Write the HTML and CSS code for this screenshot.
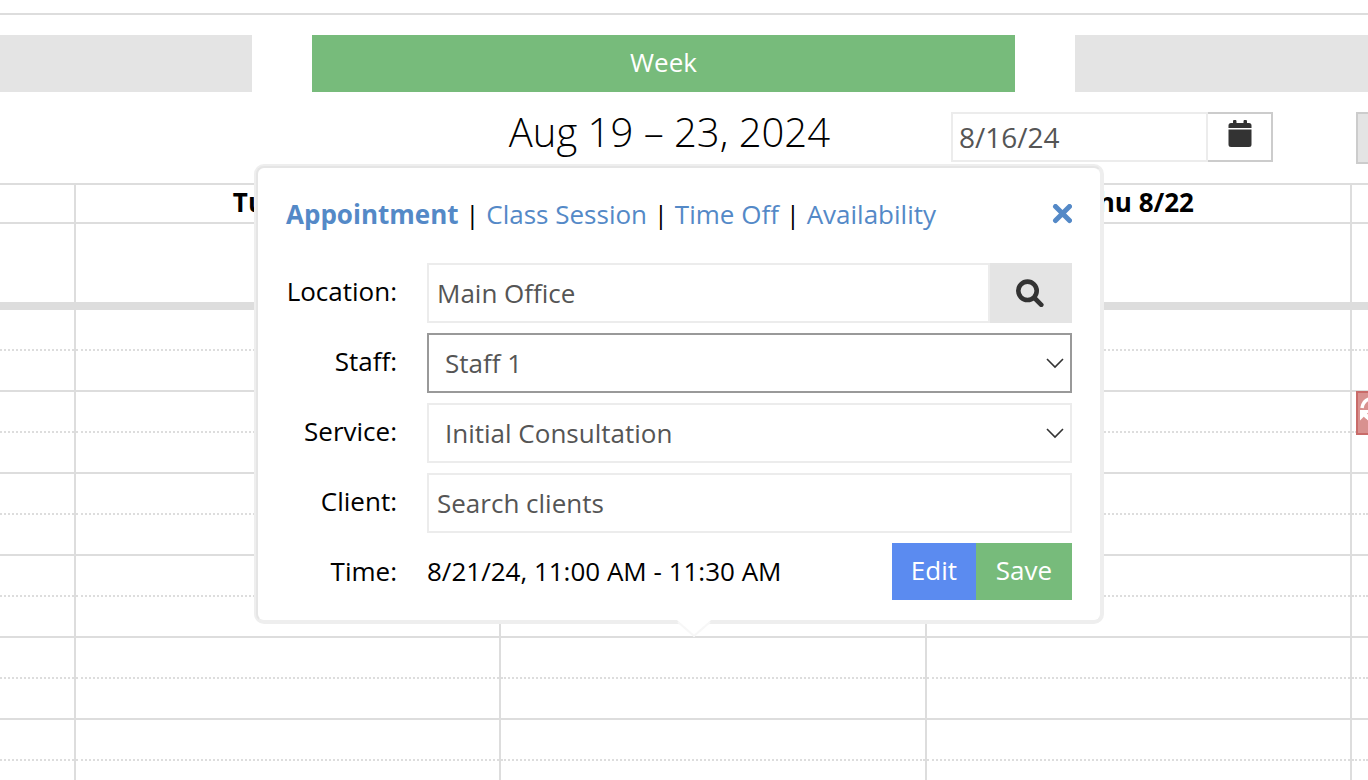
FILE: index.html
```html
<!DOCTYPE html>
<html lang="en">
<head>
  <meta charset="UTF-8">
  <meta name="viewport" content="width=device-width, initial-scale=1">
  <title>Calendar</title>
  <link rel="stylesheet" href="styles.css">
</head>
<body>
  <nav class="views">
    <button type="button" class="view" aria-label="Day"></button>
    <button type="button" class="view active">Week</button>
    <button type="button" class="view" aria-label="Month"></button>
  </nav>

  <header class="toolbar">
    <h1 class="title">Aug 19 – 23, 2024</h1>
    <div class="date-picker">
      <input type="text" class="date-input" value="8/16/24" aria-label="Date">
      <button type="button" class="date-btn" aria-label="Open calendar">
        <svg width="24" height="28" viewBox="0 0 24 28" fill="#333">
          <path d="M5 3V1.500a1.500 1.500 0 0 1 3.500 0V3h7V1.500a1.500 1.500 0 0 1 3.500 0V3h2a2.500 2.500 0 0 1 2.500 2.500V8H.5V5.500A2.500 2.500 0 0 1 3 3z"/>
          <path d="M.5 9.500h23v15A2.500 2.500 0 0 1 21 27H3a2.500 2.500 0 0 1-2.500-2.500z"/>
        </svg>
      </button>
    </div>
    <button type="button" class="nav-btn" aria-label="Previous"></button>
  </header>

  <main class="calendar">
    <table class="grid">
      <colgroup>
        <col class="col-time"><col><col><col><col class="col-last">
      </colgroup>
      <thead>
        <tr><td></td><th>Tue 8/20</th><th></th><th>Thu 8/22</th><td></td></tr>
        <tr class="all-day"><td></td><td></td><td></td><td></td><td></td></tr>
      </thead>
      <tbody>
        <tr class="half"><td></td><td></td><td></td><td></td><td></td></tr>
        <tr><td></td><td></td><td></td><td></td><td></td></tr>
        <tr class="half"><td></td><td></td><td></td><td></td><td class="has-event">
          <div class="event">
            <svg width="26" height="26" viewBox="0 0 26 26" fill="none" stroke="#fff" stroke-width="3.500">
              <path d="M2 12C3 6 7 2.500 13 2.500s8 2 10 6M23 15c-1 5-5 8-10 8-4 0-7-2-9-5"/>
              <path d="M0 14h11l-4 3.500 4 4-3 3-4-4-4 4z" fill="#fff" stroke="none"/>
              <path d="M25 2v9h-9z" fill="#fff" stroke="none"/>
            </svg>
          </div>
        </td></tr>
        <tr><td></td><td></td><td></td><td></td><td></td></tr>
        <tr class="half"><td></td><td></td><td></td><td></td><td></td></tr>
        <tr><td></td><td></td><td></td><td></td><td></td></tr>
        <tr class="half"><td></td><td></td><td></td><td></td><td></td></tr>
        <tr><td></td><td></td><td></td><td></td><td></td></tr>
        <tr class="half"><td></td><td></td><td></td><td></td><td></td></tr>
        <tr><td></td><td></td><td></td><td></td><td></td></tr>
        <tr class="half"><td></td><td></td><td></td><td></td><td></td></tr>
        <tr><td></td><td></td><td></td><td></td><td></td></tr>
      </tbody>
    </table>

    <form class="popup">
      <div class="popup-head">
        <div class="tabs">
          <a href="#" class="current">Appointment</a> |
          <a href="#">Class Session</a> |
          <a href="#">Time Off</a> |
          <a href="#">Availability</a>
        </div>
        <button type="button" class="close" aria-label="Close">
          <svg width="20" height="20" viewBox="0 0 20 20" stroke="#5489c7" stroke-width="5" stroke-linecap="round">
            <path d="M3.500 2.500l14 14M17.500 2.500l-14 14"/>
          </svg>
        </button>
      </div>

      <div class="row">
        <label for="location">Location:</label>
        <div class="field">
          <input type="text" id="location" value="Main Office">
          <button type="button" class="search-btn" aria-label="Search">
            <svg width="28" height="28" viewBox="0 0 28 28" fill="none" stroke="#333">
              <circle cx="11.500" cy="11.800" r="9.200" stroke-width="4.600"/>
              <path d="M19 19.500l6.300 6.300" stroke-width="4.600" stroke-linecap="round"/>
            </svg>
          </button>
        </div>
      </div>

      <div class="row">
        <label for="staff">Staff:</label>
        <div class="field">
          <select id="staff" class="focused"><option>Staff 1</option></select>
          <svg class="chevron" width="18" height="11" viewBox="0 0 18 11" fill="none" stroke="#333" stroke-width="1.600">
            <path d="M1 1l8 8 8-8"/>
          </svg>
        </div>
      </div>

      <div class="row">
        <label for="service">Service:</label>
        <div class="field">
          <select id="service"><option>Initial Consultation</option></select>
          <svg class="chevron" width="18" height="11" viewBox="0 0 18 11" fill="none" stroke="#333" stroke-width="1.600">
            <path d="M1 1l8 8 8-8"/>
          </svg>
        </div>
      </div>

      <div class="row">
        <label for="client">Client:</label>
        <div class="field">
          <input type="text" id="client" placeholder="Search clients">
        </div>
      </div>

      <div class="row">
        <span class="label">Time:</span>
        <div class="field">
          <span class="time">8/21/24, 11:00 AM - 11:30 AM</span>
          <button type="button" class="btn edit">Edit</button>
          <button type="submit" class="btn save">Save</button>
        </div>
      </div>

      <svg class="arrow" width="34" height="18" viewBox="0 0 34 18">
        <path d="M0 0h34L17 17z" fill="#fff"/>
        <path d="M1 2l16 14L33 2" fill="none" stroke="#f7f7f7" stroke-width="2"/>
      </svg>
    </form>
  </main>
</body>
</html>
```
FILE: styles.css
```css
* {
  box-sizing: border-box;
}

body {
  margin: 0;
  height: 100vh;
  overflow: hidden;
  font-family: "Open Sans", "Noto Sans", sans-serif;
  font-size: 26px;
  color: #000;
  background: #fff;
}

button, input, select {
  margin: 0;
  font: inherit;
  border-radius: 0;
}

button {
  padding: 0;
  border: none;
  cursor: pointer;
}

svg {
  display: block;
}

/* day / week / month switch */
.views {
  display: grid;
  grid-template-columns: 252fr 703fr 293fr;
  gap: 60px;
  margin-top: 13px;
  padding-top: 20px;
  border-top: 2px solid #ddd;
}

.view {
  height: 57px;
  padding-bottom: 4px;
  background: #e4e4e4;
}

.view.active {
  background: #77bb7b;
  color: #fff;
}

.toolbar {
  display: flex;
  justify-content: flex-end;
  align-items: flex-start;
  height: 91px;
  padding-top: 20px;
}

.title {
  margin: 0 121px 0 0;
  font-size: 40px;
  font-weight: 300;
  line-height: 40px;
}

.date-picker {
  display: flex;
  height: 50px;
  margin-right: 83px;
}

.date-input {
  width: 257px;
  padding: 0 6px;
  border: 2px solid #ececec;
  font-size: 28px;
  color: #555;
}

.date-btn {
  width: 65px;
  padding: 0 0 6px 20px;
  border: 2px solid #ccc;
  border-left: none;
  background: #fff;
}

.nav-btn {
  width: 12px;
  height: 52px;
  border: 2px solid #ccc;
  border-right: none;
  background: #e4e4e4;
}

/* week grid */
.calendar {
  position: relative;
}

.grid {
  width: 100%;
  table-layout: fixed;
  border-collapse: collapse;
}

.col-time {
  width: 75px;
}

.col-last {
  width: 17px;
}

.grid th,
.grid td {
  height: 41px;
  padding: 0;
  border-top: 2px solid #ddd;
  border-bottom: 2px solid #ddd;
  border-left: 2px solid #ddd;
}

.grid th,
.grid thead td {
  height: 39px;
  padding-bottom: 2px;
  line-height: 35px;
}

.grid td:first-child {
  border-left: none;
}

.grid .all-day td {
  height: 83px;
  border-bottom: 8px solid #ddd;
}

.grid tbody tr:first-child td {
  height: 44px;
  border-top: 8px solid #ddd;
}

.grid .half td {
  border-bottom-style: dotted;
}

.grid .half + tr td {
  border-top-style: dotted;
}

.grid .has-event {
  position: relative;
}

.event {
  position: absolute;
  top: -1px;
  left: 4px;
  right: 0;
  height: 44px;
  padding: 3px 2px;
  overflow: hidden;
  border: 2px solid #c96b69;
  border-right: none;
  background: #d8918f;
}

/* new booking popup */
.popup {
  position: absolute;
  top: -17px;
  left: calc(50% - 428px);
  width: 846px;
  padding: 20px 28px;
  border: 2px solid;
  border-color: #e5e5e5 #eee #eee #e5e5e5;
  border-radius: 8px;
  box-shadow: 0 0 0 2px #eee;
  background: #fff;
}

.popup-head {
  display: flex;
  justify-content: space-between;
  align-items: center;
  height: 52px;
  margin-bottom: 23px;
}

.tabs a {
  color: #5489c7;
  text-decoration: none;
}

.tabs .current {
  font-weight: 700;
}

.close {
  background: none;
}

.row {
  display: flex;
  gap: 30px;
  margin-bottom: 10px;
}

.row:last-of-type {
  margin-bottom: 0;
}

.row label,
.label {
  width: 111px;
  line-height: 57px;
  text-align: right;
}

.field {
  position: relative;
  display: flex;
  flex: 1;
}

.field input,
.field select {
  flex: 1;
  min-width: 0;
  height: 60px;
  padding: 0 8px;
  border: 2px solid #ececec;
  background: #fff;
  color: #555;
}

.field select {
  padding: 0 16px;
  appearance: none;
}

.field .focused {
  border-color: #999;
}

.field input::placeholder {
  color: #555;
  opacity: 1;
}

.search-btn {
  width: 82px;
  padding-left: 26px;
  background: #e4e4e4;
}

.chevron {
  position: absolute;
  top: 25px;
  right: 8px;
  pointer-events: none;
}

.time {
  flex: 1;
  line-height: 57px;
}

.btn {
  height: 57px;
  padding: 0 19px 4px;
  color: #fff;
}

.edit {
  background: #5b8bf0;
}

.save {
  width: 96px;
  background: #77bb7b;
}

.arrow {
  position: absolute;
  top: 100%;
  left: 419px;
}
```
